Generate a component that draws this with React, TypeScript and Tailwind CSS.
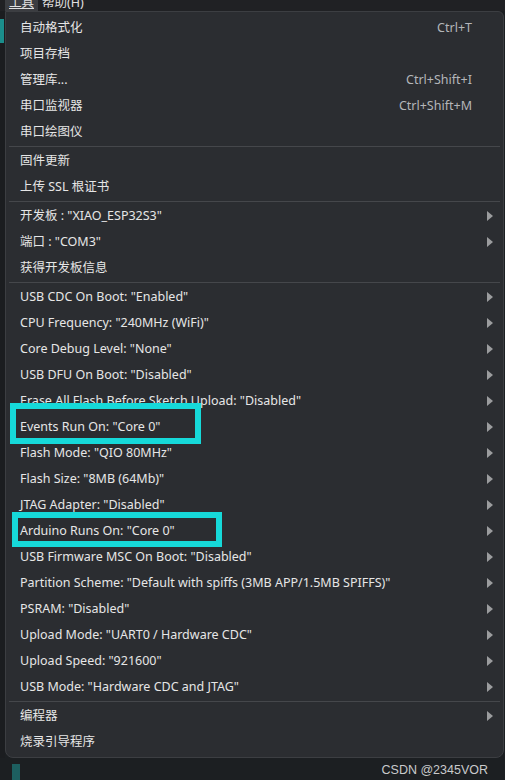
import React from 'react'

type Item = { label: string; shortcut?: string; sub?: boolean }

const groups: Item[][] = [
  [
    { label: '自动格式化', shortcut: 'Ctrl+T' },
    { label: '项目存档' },
    { label: '管理库...', shortcut: 'Ctrl+Shift+I' },
    { label: '串口监视器', shortcut: 'Ctrl+Shift+M' },
    { label: '串口绘图仪' },
  ],
  [{ label: '固件更新' }, { label: '上传 SSL 根证书' }],
  [
    { label: '开发板 : "XIAO_ESP32S3"', sub: true },
    { label: '端口 : "COM3"', sub: true },
    { label: '获得开发板信息' },
  ],
  [
    { label: 'USB CDC On Boot: "Enabled"', sub: true },
    { label: 'CPU Frequency: "240MHz (WiFi)"', sub: true },
    { label: 'Core Debug Level: "None"', sub: true },
    { label: 'USB DFU On Boot: "Disabled"', sub: true },
    { label: 'Erase All Flash Before Sketch Upload: "Disabled"', sub: true },
    { label: 'Events Run On: "Core 0"', sub: true },
    { label: 'Flash Mode: "QIO 80MHz"', sub: true },
    { label: 'Flash Size: "8MB (64Mb)"', sub: true },
    { label: 'JTAG Adapter: "Disabled"', sub: true },
    { label: 'Arduino Runs On: "Core 0"', sub: true },
    { label: 'USB Firmware MSC On Boot: "Disabled"', sub: true },
    { label: 'Partition Scheme: "Default with spiffs (3MB APP/1.5MB SPIFFS)"', sub: true },
    { label: 'PSRAM: "Disabled"', sub: true },
    { label: 'Upload Mode: "UART0 / Hardware CDC"', sub: true },
    { label: 'Upload Speed: "921600"', sub: true },
    { label: 'USB Mode: "Hardware CDC and JTAG"', sub: true },
  ],
  [{ label: '编程器', sub: true }, { label: '烧录引导程序' }],
]

function Arrow() {
  return (
    <svg width="6" height="10" viewBox="0 0 6 10" className="shrink-0">
      <path d="M0 0 L6 5 L0 10 Z" fill="#9b9c9e" />
    </svg>
  )
}

function Row({ item }: { item: Item }) {
  return (
    <div className="flex h-[26px] items-center pl-[14px] pr-[10px]">
      <span className="flex-1 whitespace-nowrap text-[#e6e6e6]">{item.label}</span>
      {item.shortcut && <span className="mr-[21px] text-[#b4b6b9]">{item.shortcut}</span>}
      {item.sub && <Arrow />}
    </div>
  )
}

export default function App() {
  return (
    <div
      className="relative h-[780px] w-[505px] overflow-hidden bg-[#1c1f22] text-[12.5px]"
      style={{ fontFamily: '"Noto Sans", "Noto Sans CJK SC", sans-serif' }}
    >
      {/* menu bar */}
      <div className="flex h-[11px] items-end overflow-hidden bg-[#202124] text-[12.5px] leading-[18px] text-[#e0e0e0]">
        <div className="ml-[5px] h-[11px] bg-[#3b3d41] px-[4px]">
          <span className="-mt-[6px] block underline">工具</span>
        </div>
        <div className="ml-[2px] h-[11px] px-[2px]">
          <span className="-mt-[6px] block">帮助(H)</span>
        </div>
      </div>

      <div className="flex">
        {/* left editor strip */}
        <div className="w-[5px] shrink-0 bg-[#1b1d20] pt-[8px]">
          <div className="h-[24px] w-[4px] bg-[#1b8e8c]" />
        </div>

        {/* dropdown */}
        <div className="w-[499px] rounded-b-[8px] rounded-tr-[6px] border border-[#3c3e42] bg-[#2b2d31] pt-[3px] pb-[2px] leading-[18px]">
          {groups.map((g, gi) => (
            <div key={gi}>
              {gi > 0 && <div className="mx-[3px] my-[1px] h-px bg-[#45474b]" />}
              {g.map((it) => (
                <Row key={it.label} item={it} />
              ))}
            </div>
          ))}
        </div>
      </div>

      {/* editor below */}
      <div className="flex items-start pt-[3px]">
        <div className="ml-[12px] mt-[3px] h-[20px] w-[8px] bg-[#1d5f60]" />
        <div className="flex-1" />
        <span
          className="mr-[17px] text-[12.5px] text-[#c9cacc]"
          style={{ fontFamily: '"Liberation Sans", Arial, sans-serif' }}
        >
          CSDN @2345VOR
        </span>
      </div>

      {/* highlight boxes */}
      <div className="absolute left-[10px] top-[403px] h-[41px] w-[191px] border-[6px] border-[#16d9d9]" />
      <div className="absolute left-[12px] top-[512px] h-[35px] w-[210px] border-[6px] border-[#16d9d9]" />
    </div>
  )
}
